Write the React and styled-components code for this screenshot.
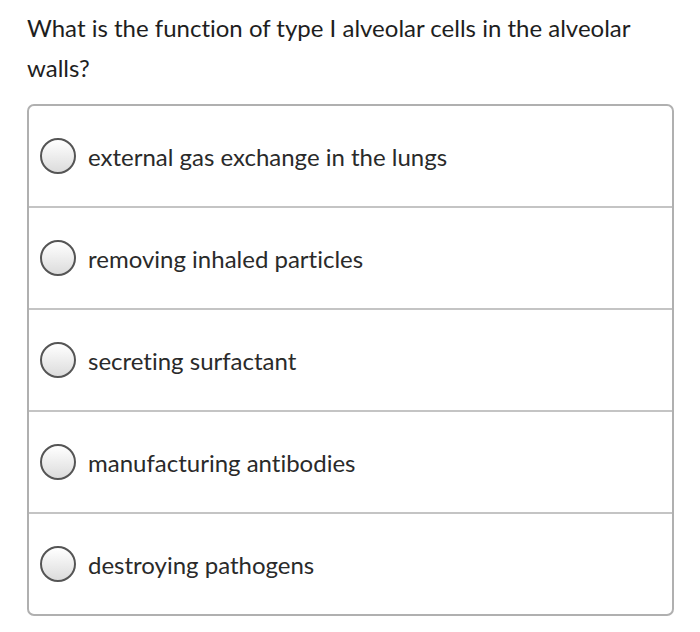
import React from "react";
import styled, { createGlobalStyle } from "styled-components";

const Global = createGlobalStyle`
  body {
    margin: 0;
    background: #ffffff;
    font-family: "Lato", "Open Sans", sans-serif;
    font-variant-ligatures: none;
    color: #222;
  }
`;

const Page = styled.div`
  width: 700px;
  height: 632px;
  padding: 8px 26px 0 27px;
  box-sizing: border-box;
`;

const Question = styled.div`
  font-size: 24px;
  line-height: 40px;
  max-width: 620px;
  color: #1e1e1e;
  margin: 0 0 16px 0;
`;

const Panel = styled.div`
  border: 2px solid #b0b0b0;
  border-radius: 7px;
  overflow: hidden;
`;

const Row = styled.label`
  display: flex;
  align-items: center;
  height: 100px;
  padding-left: 11px;
  border-top: ${props => (props.first ? "none" : "2px solid #c4c4c4")};
  cursor: pointer;
`;

const Radio = styled.span`
  width: 32px;
  height: 32px;
  border-radius: 50%;
  border: 2px solid #555;
  background: linear-gradient(#ffffff, #dcdcdc);
  flex-shrink: 0;
  margin-right: 12px;
`;

const Label = styled.span`
  font-size: 24px;
  color: #2a2a2a;
`;

const options = [
  "external gas exchange in the lungs",
  "removing inhaled particles",
  "secreting surfactant",
  "manufacturing antibodies",
  "destroying pathogens",
];

const App = () => (
  <Page>
    <Global />
    <Question>What is the function of type I alveolar cells in the alveolar walls?</Question>
    <Panel>
      {options.map((o, i) => (
        <Row key={o} first={i === 0}>
          <Radio />
          <Label>{o}</Label>
        </Row>
      ))}
    </Panel>
  </Page>
);

export default App;
